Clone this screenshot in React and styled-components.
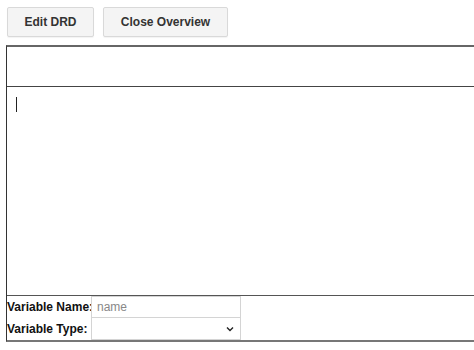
import React from 'react'
import styled, { createGlobalStyle } from 'styled-components'

const Global = createGlobalStyle`
  html, body {
    margin: 0;
    padding: 0;
    background: #fff;
    overflow: hidden;
    font-family: "Liberation Sans", Arial, sans-serif;
  }
`

const Page = styled.div`
  padding: 7px 0 0 6px;
`

const Toolbar = styled.div`
  display: flex;
  gap: 9px;
  padding-left: 1px;
`

const Button = styled.button`
  height: 30px;
  width: ${p => p.$w}px;
  background: #f4f4f4;
  border: 1px solid #d9d9d9;
  border-radius: 2px;
  color: #333;
  font-family: "Liberation Sans", Arial, sans-serif;
  font-size: 12px;
  font-weight: bold;
  padding: 0;
  box-shadow: 0 1px 1px rgba(0, 0, 0, 0.05);
`

const Frame = styled.div`
  margin-top: 8px;
  border: 1px solid #333;
  border-top: 2px solid #666;
  border-bottom: 2px solid #777;
  border-right: none;
  display: flex;
  flex-direction: column;
`

const Header = styled.div`
  height: 39px;
  border-bottom: 1px solid #444;
`

const Editor = styled.div`
  height: 209px;
  padding: 10px 9px;
  box-sizing: border-box;
  border-bottom: 1px solid #555;
`

const Caret = styled.div`
  width: 1px;
  height: 15px;
  background: #222;
`

const Fields = styled.div`
  display: grid;
  grid-template-columns: 84px 150px;
  grid-auto-rows: 22px;
`

const Label = styled.label`
  font-size: 12px;
  font-weight: bold;
  color: #111;
  display: flex;
  align-items: center;
  white-space: nowrap;
`

const Input = styled.input`
  box-sizing: border-box;
  height: 22px;
  border: 1px solid #d4d4d4;
  padding: 0 5px;
  font-family: "Liberation Sans", Arial, sans-serif;
  font-size: 12px;
  outline: none;
  &::placeholder { color: #888; }
`

const Select = styled.div`
  box-sizing: border-box;
  height: 22px;
  border: 1px solid #d4d4d4;
  border-top: none;
  display: flex;
  align-items: center;
  justify-content: flex-end;
  padding-right: 6px;
`

export default function App() {
  return (
    <>
      <Global />
      <Page>
        <Toolbar>
          <Button $w={87}>Edit DRD</Button>
          <Button $w={125}>Close Overview</Button>
        </Toolbar>
        <Frame>
          <Header />
          <Editor>
            <Caret />
          </Editor>
          <Fields>
            <Label>Variable Name:</Label>
            <Input placeholder="name" />
            <Label>Variable Type:</Label>
            <Select>
              <svg width="8" height="6" viewBox="0 0 8 6">
                <path d="M1 1.5 L4 4.5 L7 1.5" stroke="#222" strokeWidth="1.4" fill="none" />
              </svg>
            </Select>
          </Fields>
        </Frame>
      </Page>
    </>
  )
}
